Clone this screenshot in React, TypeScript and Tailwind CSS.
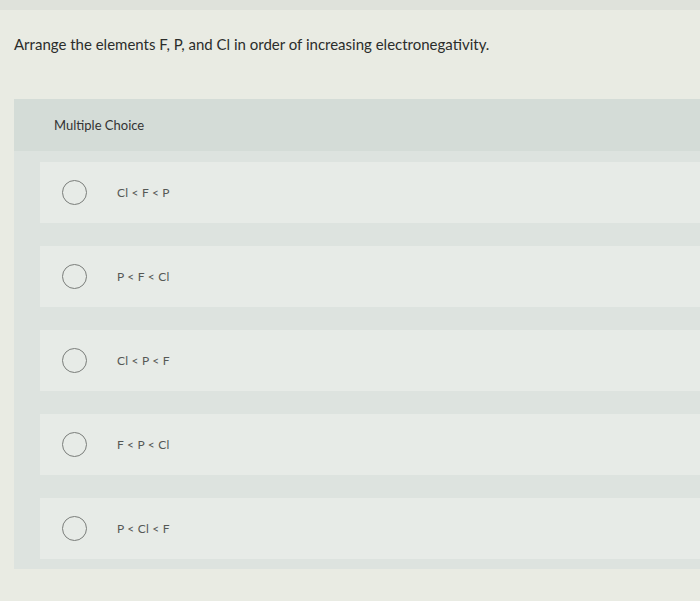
const OPTIONS = ['Cl < F < P', 'P < F < Cl', 'Cl < P < F', 'F < P < Cl', 'P < Cl < F'];

export default function App() {
  return (
    <div className="min-h-screen w-full overflow-hidden bg-[#e9ebe3] font-['Lato',sans-serif]">
      <div className="h-[10px] bg-[#dfe2db]" />
      <div className="pl-[14px] pt-[25px]">
        <p className="text-[15px] leading-[18px] text-[#2b2d2b]">
          Arrange the elements F, P, and Cl in order of increasing electronegativity.
        </p>
        <div className="mt-[46px] bg-[#dde3df]">
          <div className="h-[52px] bg-[#d4dcd7] pl-[40px] pt-[17px] text-[13px] text-[#333]">
            Multiple Choice
          </div>
          <div className="flex flex-col gap-[23px] pl-[26px] pt-[11px] pb-[10px]">
            {OPTIONS.map((o) => (
              <div key={o} className="flex h-[61px] items-center bg-[#e7ebe7]">
                <span className="ml-[22px] h-[25px] w-[25px] rounded-full border-[1.5px] border-[#7a7d7a]" />
                <span className="ml-[30px] text-[12px] tracking-[0.2px] text-[#555855]">{o}</span>
              </div>
            ))}
          </div>
        </div>
      </div>
    </div>
  );
}
